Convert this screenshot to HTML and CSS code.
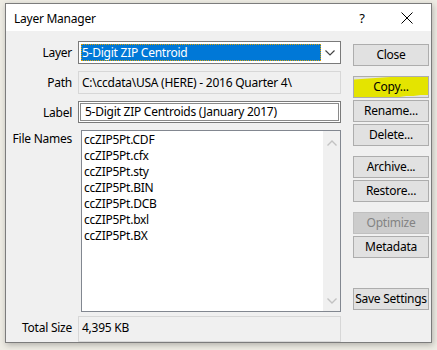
FILE: index.html
```html
<!DOCTYPE html>
<html>
<head>
<meta charset="utf-8">
<link rel="stylesheet" href="styles.css">
</head>
<body>
<div class="window">
  <div class="titlebar">
    <span class="title">Layer Manager</span>
    <span class="help">?</span>
    <span class="close-x">
      <svg width="12" height="12" viewBox="0 0 12 12"><path d="M0.5 0.5 L11.5 11.5 M11.5 0.5 L0.5 11.5" stroke="#000" stroke-width="1"/></svg>
    </span>
  </div>
  <div class="client">
    <div class="form">
      <div class="lbl">Layer</div>
      <div class="combo">
        <div class="combo-sel"><span class="focus">5-Digit ZIP Centroid</span></div>
        <div class="combo-arrow">
          <svg width="10" height="6" viewBox="0 0 10 6"><path d="M0.5 0.5 L5 5 L9.5 0.5" stroke="#444" stroke-width="1.2" fill="none"/></svg>
        </div>
      </div>
      <div class="lbl">Path</div>
      <div class="field ro">C:\ccdata\USA (HERE) - 2016 Quarter 4\</div>
      <div class="lbl">Label</div>
      <div class="field edit">5-Digit ZIP Centroids (January 2017)</div>
      <div class="lbl top">File Names</div>
      <div class="list">
        <div class="items">
          <div>ccZIP5Pt.CDF</div>
          <div>ccZIP5Pt.cfx</div>
          <div>ccZIP5Pt.sty</div>
          <div>ccZIP5Pt.BIN</div>
          <div>ccZIP5Pt.DCB</div>
          <div>ccZIP5Pt.bxl</div>
          <div>ccZIP5Pt.BX</div>
        </div>
        <div class="vscroll">
          <svg width="10" height="6" viewBox="0 0 10 6"><path d="M0.5 5.5 L5 1 L9.5 5.5" stroke="#c2c2c2" stroke-width="1.4" fill="none"/></svg>
          <svg width="10" height="6" viewBox="0 0 10 6"><path d="M0.5 0.5 L5 5 L9.5 0.5" stroke="#c2c2c2" stroke-width="1.4" fill="none"/></svg>
        </div>
      </div>
      <div class="lbl tight">Total Size</div>
      <div class="field ro tight">4,395 KB</div>
    </div>
    <div class="buttons">
      <div class="btn b-close">Close</div>
      <div class="btn b-copy">Copy...</div>
      <div class="btn b-near">Rename...</div>
      <div class="btn b-near">Delete...</div>
      <div class="btn b-group">Archive...</div>
      <div class="btn b-near">Restore...</div>
      <div class="btn b-group disabled">Optimize</div>
      <div class="btn b-near">Metadata</div>
      <div class="btn b-save">Save Settings</div>
    </div>
  </div>
</div>
</body>
</html>
```
FILE: styles.css
```css
html, body {
  margin: 0;
  padding: 0;
}
body {
  width: 437px;
  height: 350px;
  overflow: hidden;
  background: #eeece4;
  font-family: "Noto Sans", "Open Sans", sans-serif;
  font-size: 12px;
  letter-spacing: -0.25px;
  color: #000;
}
.window {
  margin: 3px 0 0 5px;
  width: 425px;
  height: 338px;
  border: 1px solid #7c7c7c;
  background: #f0f0f0;
  box-shadow: 1px 2px 6px rgba(0,0,0,0.25);
  display: flex;
  flex-direction: column;
}
.titlebar {
  height: 29px;
  background: #fff;
  display: flex;
  align-items: center;
  padding-left: 8px;
  font-size: 12px;
}
.title {
  flex: 1;
  margin-top: 1px;
}
.help {
  width: 14px;
  margin-right: 32px;
  font-size: 13px;
  text-align: center;
}
.close-x {
  width: 12px;
  height: 12px;
  margin-right: 18px;
  display: flex;
}
.client {
  flex: 1;
  display: flex;
  padding-top: 10px;
}
.form {
  display: grid;
  grid-template-columns: 66px 263px;
  grid-template-rows: 23px 23px 22px 182px 23px;
  column-gap: 6px;
  row-gap: 7px;
  align-content: start;
}
.lbl {
  text-align: right;
  line-height: 23px;
  white-space: nowrap;
}
.lbl.top {
  line-height: 16px;
  padding-top: 1px;
}
.lbl.tight, .field.tight {
  margin-top: -3px;
}
.combo {
  border: 1px solid #7a7a7a;
  background: #fff;
  display: flex;
  padding: 2px;
  box-sizing: border-box;
}
.combo-sel {
  width: 240px;
  background: #0078d7;
  color: #fff;
  display: flex;
  align-items: center;
}
.focus {
  outline: 1px dotted #e0a000;
  outline-offset: 0;
  line-height: 15px;
  width: 238px;
  margin-left: 1px;
}
.combo-arrow {
  flex: 1;
  display: flex;
  align-items: center;
  justify-content: center;
}
.field {
  box-sizing: border-box;
  line-height: 21px;
  padding-left: 3px;
  white-space: nowrap;
  overflow: hidden;
}
.field.ro {
  border: 1px solid #d7d7d7;
  background: #f0f0f0;
}
.field.edit {
  border: 1px solid #7a7a7a;
  background: #fff;
  padding-left: 6px;
  line-height: 20px;
  box-shadow: inset 0 0 0 1px #fff, inset 0 0 0 2px #8a8a8a;
}
.list {
  margin-left: 3px;
  width: 260px;
  box-sizing: border-box;
  border: 1px solid #828790;
  background: #fff;
  display: flex;
}
.items {
  flex: 1;
  padding: 1px 0 0 2px;
  line-height: 16px;
}
.vscroll {
  width: 17px;
  background: #f0f0f0;
  display: flex;
  flex-direction: column;
  justify-content: space-between;
  align-items: center;
  padding: 9px 0 7px;
}
.buttons {
  margin-left: 12px;
  width: 76px;
  display: flex;
  flex-direction: column;
}
.btn {
  box-sizing: border-box;
  height: 22px;
  border: 1px solid #adadad;
  background: #e1e1e1;
  text-align: center;
  line-height: 20px;
  white-space: nowrap;
}
.b-close { margin-top: 3px; }
.b-copy {
  margin-top: 10px;
  background: linear-gradient(176deg, #e1e1e1 0 2px, #e4e400 3px, #e4e400 90%, #e1e1e1 92%);
}
.b-near { margin-top: 2px; }
.b-group { margin-top: 10px; }
.b-save { margin-top: 30px; padding: 0; }
.btn.disabled {
  background: #cccccc;
  border-color: #bfbfbf;
  color: #838383;
}
```
